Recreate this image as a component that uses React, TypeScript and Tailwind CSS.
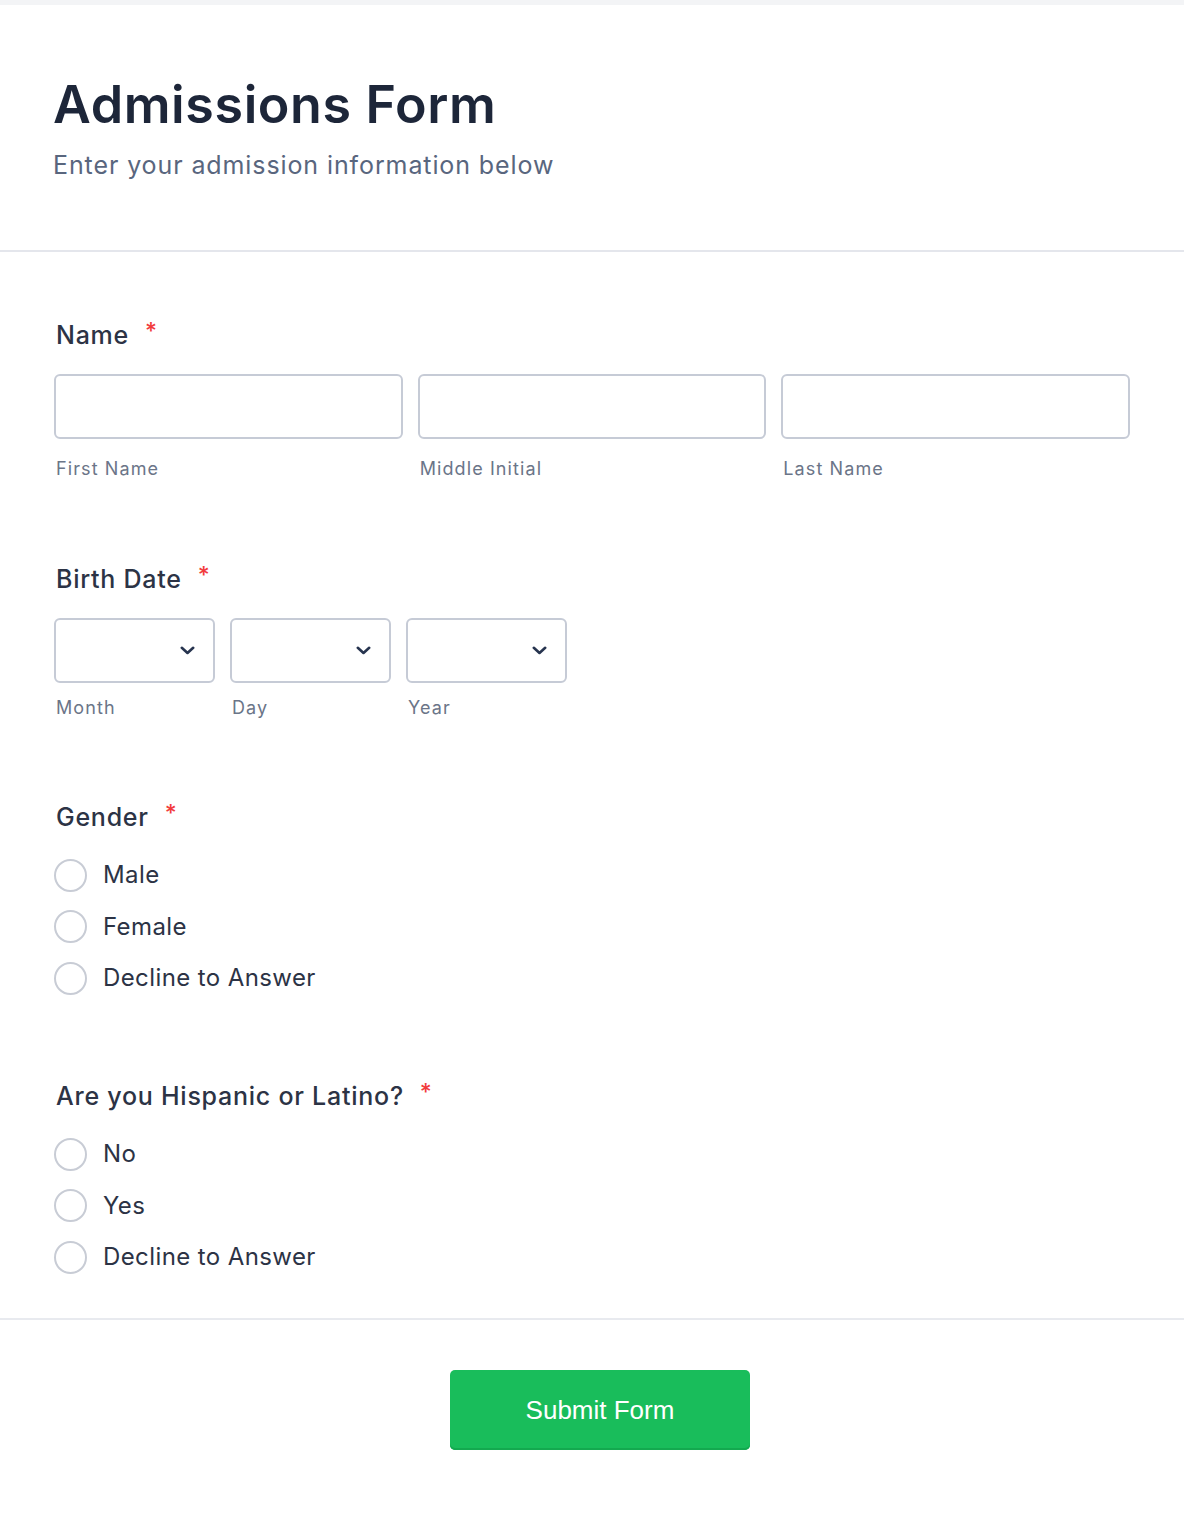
import React from "react";

const Asterisk = () => (
  <span className="ml-[16px] text-[23px] leading-none text-[#f23b3c] relative top-[-3px]">*</span>
);

function Label({ children }: { children: React.ReactNode }) {
  return (
    <div className="flex items-start text-[25px] leading-none font-medium text-[#2c3345] tracking-[0.75px]">
      <span>{children}</span>
      <Asterisk />
    </div>
  );
}

function Chevron() {
  return (
    <svg width="15" height="9" viewBox="0 0 15 9" fill="none">
      <path d="M1.8 1.8 L7.5 7 L13.2 1.8" stroke="#27344f" strokeWidth="2.6" strokeLinecap="round" strokeLinejoin="round" />
    </svg>
  );
}

function Radio({ label }: { label: string }) {
  return (
    <div className="flex items-center h-[32px]">
      <div className="w-[33px] h-[33px] rounded-full border-2 border-[#c8ccd5] bg-white shrink-0" />
      <span className="ml-[16px] text-[24px] leading-none text-[#2c3345] tracking-[0.4px]">{label}</span>
    </div>
  );
}

export default function App() {
  return (
    <div className="w-[1184px] min-h-[1516px] bg-white" style={{ fontFamily: "Inter, 'Noto Sans', sans-serif" }}>
      <div className="h-[5px] bg-[#f3f4f6]" />
      <header className="pt-[74px] pb-[72px] pl-[53px] border-b-2 border-[#e4e6ec]">
        <h1 className="text-[52px] leading-none font-semibold text-[#1d2639] tracking-[0.6px]">Admissions Form</h1>
        <p className="mt-[22px] text-[25px] leading-none text-[#59667e] tracking-[0.9px]">Enter your admission information below</p>
      </header>

      <main className="pt-[71px] pb-[45px] px-[54px] border-b-2 border-[#e8eaef]">
        <section className="pl-[2px]">
          <Label>Name</Label>
        </section>
        <div className="mt-[26px] grid grid-cols-3 gap-[15px]">
          {["First Name", "Middle Initial", "Last Name"].map((s) => (
            <div key={s}>
              <div className="h-[65px] rounded-[6px] border-2 border-[#c6cbd6] bg-white" />
              <div className="mt-[21px] pl-[2px] text-[18px] leading-none text-[#6b7588] tracking-[1.1px]">{s}</div>
            </div>
          ))}
        </div>

        <section className="mt-[89px] pl-[2px]">
          <Label>Birth Date</Label>
        </section>
        <div className="mt-[26px] flex gap-[15px]">
          {["Month", "Day", "Year"].map((s) => (
            <div key={s} className="w-[161px]">
              <div className="h-[65px] rounded-[6px] border-2 border-[#c6cbd6] bg-white flex items-center justify-end pr-[18px]">
                <Chevron />
              </div>
              <div className="mt-[16px] pl-[2px] text-[18px] leading-none text-[#6b7588] tracking-[1.1px]">{s}</div>
            </div>
          ))}
        </div>

        <section className="mt-[88px] pl-[2px]">
          <Label>Gender</Label>
        </section>
        <div className="mt-[29px] flex flex-col gap-[19.5px]">
          <Radio label="Male" />
          <Radio label="Female" />
          <Radio label="Decline to Answer" />
        </div>

        <section className="mt-[90px] pl-[2px]">
          <Label>Are you Hispanic or Latino?</Label>
        </section>
        <div className="mt-[29px] flex flex-col gap-[19.5px]">
          <Radio label="No" />
          <Radio label="Yes" />
          <Radio label="Decline to Answer" />
        </div>
      </main>

      <footer className="pt-[50px] pb-[66px] pl-[16px] flex justify-center">
        <button
          type="button"
          className="w-[300px] h-[80px] rounded-[5px] bg-[#19bd5b] text-white text-[26px] shadow-[inset_0_-2px_0_#13a94f]"
          style={{ fontFamily: "'Liberation Sans', Arial, sans-serif" }}
        >
          Submit Form
        </button>
      </footer>
    </div>
  );
}
